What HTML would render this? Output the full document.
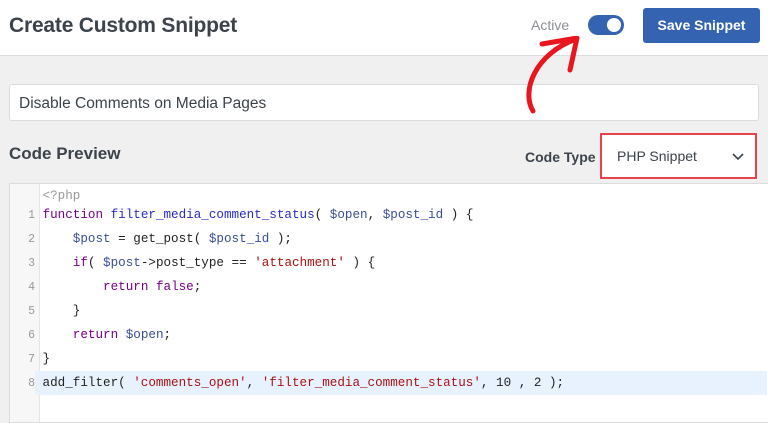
<!DOCTYPE html>
<html><head><style>
body{margin:0;width:768px;height:419px;background:#f0f0f1;font-family:"Liberation Sans",sans-serif;position:relative;overflow:hidden}
.hdr{position:absolute;left:0;top:0;width:768px;height:55px;background:#fff;border-bottom:1px solid #dcdcde}
.title{position:absolute;left:9px;top:14px;font-size:21px;color:#3c434a;font-weight:bold;letter-spacing:-0.2px}
.active{position:absolute;left:531px;top:17px;font-size:14px;color:#8c8f94}
.tog{position:absolute;left:588px;top:15px;width:36px;height:20px;border-radius:10px;background:#3463b2}
.tog:after{content:"";position:absolute;right:3px;top:3px;width:14px;height:14px;border-radius:50%;background:#fff}
.btn{position:absolute;left:643px;top:8px;width:117px;height:35px;background:#3463b2;border-radius:3px;color:#fff;font-weight:bold;font-size:14px;text-align:center;line-height:35px}
.inp{position:absolute;left:9px;top:84px;height:37px;background:#fff;border:1px solid #dcdcde;border-radius:3px;font-size:15.5px;color:#3c434a;line-height:37px;padding-left:9px;box-sizing:border-box;width:750px}
.cp{position:absolute;left:9px;top:144px;font-size:17px;font-weight:bold;color:#3c434a}
.ct{position:absolute;left:525px;top:149px;font-size:14px;font-weight:bold;color:#3c434a}
.sel{position:absolute;left:600px;top:133px;width:157px;height:46px;border:2px solid #e6444c;box-sizing:border-box;background:#fff}
.sel span{position:absolute;left:15px;top:13px;font-size:14px;color:#3c434a}
.code{position:absolute;left:9px;top:183px;width:760px;height:240px;background:#fff;border:1px solid #dcdcde;box-sizing:border-box}
.gut{position:absolute;left:0;top:0;width:29px;height:100%;background:#f7f7f7;border-right:1px solid #e5e5e5}
.ln{position:absolute;left:0;height:24px;width:760px;font-family:"Liberation Mono",monospace;font-size:12.6px;line-height:24px;color:#222;white-space:pre}
.ln i{font-style:normal;display:inline-block;width:25px;text-align:right;color:#999;font-size:11.5px}
.ln b{font-weight:normal}
.k{color:#708}.d{color:#2929c8}.v{color:#3a4d9a}.s{color:#a11}.m{color:#999}
.hl{background:#e8f2fe}
</style></head><body>
<div class="hdr">
<div class="title">Create Custom Snippet</div>
<div class="active">Active</div>
<div class="tog"></div>
<div class="btn">Save Snippet</div>
</div>
<div class="inp">Disable Comments on Media Pages</div>
<svg style="position:absolute;left:515px;top:36px" width="70" height="80" viewBox="0 0 70 80"><path d="M18 75 C6 55 20 18 61 3" fill="none" stroke="#e8161e" stroke-width="5" stroke-linecap="round"/><path d="M27 8 L62 2 L55 34" fill="none" stroke="#e8161e" stroke-width="5" stroke-linecap="round" stroke-linejoin="round"/></svg>
<div class="cp">Code Preview</div>
<div class="ct">Code Type</div>
<div class="sel"><span>PHP Snippet</span><svg style="position:absolute;left:130px;top:18px" width="12" height="8"><path d="M1 1 L6 6 L11 1" fill="none" stroke="#3c434a" stroke-width="1.6"/></svg></div>
<div class="code"><div class="gut"></div>
<div class="ln" style="top:0px"><i> </i> <b class="m">&lt;?php</b></div>
<div class="ln" style="top:19px"><i>1</i> <b class="k">function</b> <b class="d">filter_media_comment_status</b>( <b class="v">$open</b>, <b class="v">$post_id</b> ) {</div>
<div class="ln" style="top:43px"><i>2</i>     <b class="v">$post</b> = get_post( <b class="v">$post_id</b> );</div>
<div class="ln" style="top:67px"><i>3</i>     <b class="k">if</b>( <b class="v">$post</b>-&gt;post_type == <b class="s">'attachment'</b> ) {</div>
<div class="ln" style="top:91px"><i>4</i>         <b class="k">return</b> <b class="k">false</b>;</div>
<div class="ln" style="top:115px"><i>5</i>     }</div>
<div class="ln" style="top:139px"><i>6</i>     <b class="k">return</b> <b class="v">$open</b>;</div>
<div class="ln" style="top:163px"><i>7</i> }</div>
<div class="ln" style="top:187px"><i>8</i><span class="hl" style="display:inline-block;width:732px"> add_filter( <b class="s">'comments_open'</b>, <b class="s">'filter_media_comment_status'</b>, 10 , 2 );</span></div>
</div>
</body></html>
